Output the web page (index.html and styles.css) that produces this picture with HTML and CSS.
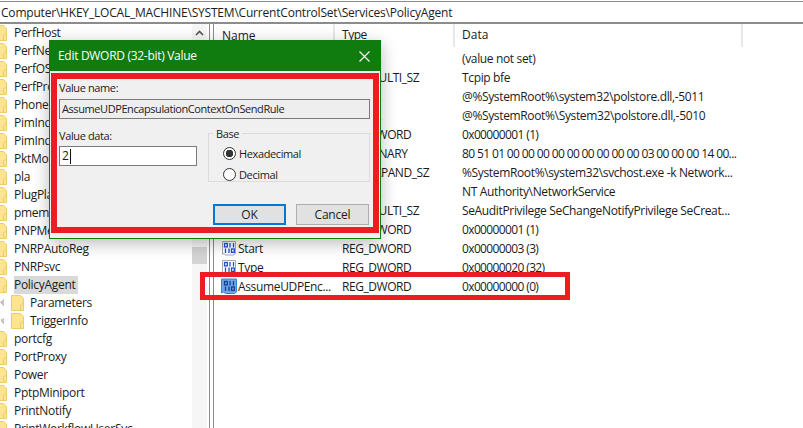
FILE: index.html
```html
<!DOCTYPE html>
<html lang="en">
<head>
<meta charset="utf-8">
<title>Registry Editor</title>
<link rel="stylesheet" href="styles.css">
</head>
<body>
<svg class="defs" width="0" height="0" aria-hidden="true">
  <symbol id="folder" viewBox="0 0 13 16">
    <path d="M.5.5h9l3 3v12H.5z" fill="#fde58f" stroke="#eccb6b"/>
    <path d="M9.5 15.5V10l3-2" fill="none" stroke="#eccb6b"/>
  </symbol>
  <symbol id="dword" viewBox="0 0 16 16">
    <path d="M1.5 1.5h13v12l-2 1.500h-8l-2-1.500-1 1z" fill="#fff" stroke="#a9a9a9"/>
    <g fill="none" stroke="#1c4fd0" stroke-width="1.300">
      <rect x="3.500" y="3.500" width="2.800" height="3.400"/>
      <path d="M9 3v4.500M12.500 3v4.500"/>
      <path d="M4.500 8.500V13M8 8.500V13"/>
      <rect x="10.500" y="9" width="2.800" height="3.400"/>
    </g>
  </symbol>
  <symbol id="dword-sel" viewBox="0 0 16 16">
    <path d="M.5 1h15v13l-2 1.500h-9l-2-1.500-2 1z" fill="#6ea6e2" stroke="#3f82cc"/>
    <g fill="none" stroke="#123f9a" stroke-width="1.300">
      <rect x="3.500" y="3.500" width="2.800" height="3.400"/>
      <path d="M9 3v4.500M12.500 3v4.500"/>
      <path d="M4.500 8.500V13M8 8.500V13"/>
      <rect x="10.500" y="9" width="2.800" height="3.400"/>
    </g>
  </symbol>
</svg>

<header class="address">Computer\HKEY_LOCAL_MACHINE\SYSTEM\CurrentControlSet\Services\PolicyAgent</header>

<main class="panes">
  <nav class="tree">
    <ul class="tree-list">
      <li class="node"><svg class="folder"><use href="#folder"/></svg><span class="label">PerfHost</span></li>
      <li class="node"><svg class="folder"><use href="#folder"/></svg><span class="label">PerfNet</span></li>
      <li class="node"><svg class="folder"><use href="#folder"/></svg><span class="label">PerfOS</span></li>
      <li class="node"><svg class="folder"><use href="#folder"/></svg><span class="label">PerfProc</span></li>
      <li class="node"><svg class="folder"><use href="#folder"/></svg><span class="label">PhoneSvc</span></li>
      <li class="node"><svg class="folder"><use href="#folder"/></svg><span class="label">PimIndexMaintenanceSvc</span></li>
      <li class="node"><svg class="folder"><use href="#folder"/></svg><span class="label">PimIndexSvc</span></li>
      <li class="node"><svg class="folder"><use href="#folder"/></svg><span class="label">PktMon</span></li>
      <li class="node"><svg class="folder"><use href="#folder"/></svg><span class="label">pla</span></li>
      <li class="node"><svg class="folder"><use href="#folder"/></svg><span class="label">PlugPlay</span></li>
      <li class="node"><svg class="folder"><use href="#folder"/></svg><span class="label">pmem</span></li>
      <li class="node"><svg class="folder"><use href="#folder"/></svg><span class="label">PNPMem</span></li>
      <li class="node"><svg class="folder"><use href="#folder"/></svg><span class="label">PNRPAutoReg</span></li>
      <li class="node"><svg class="folder"><use href="#folder"/></svg><span class="label">PNRPsvc</span></li>
      <li class="node"><svg class="folder"><use href="#folder"/></svg><span class="label selected">PolicyAgent</span></li>
      <li class="node child"><span class="chevron"></span><svg class="folder"><use href="#folder"/></svg><span class="label">Parameters</span></li>
      <li class="node child"><span class="chevron"></span><svg class="folder"><use href="#folder"/></svg><span class="label">TriggerInfo</span></li>
      <li class="node"><svg class="folder"><use href="#folder"/></svg><span class="label">portcfg</span></li>
      <li class="node"><svg class="folder"><use href="#folder"/></svg><span class="label">PortProxy</span></li>
      <li class="node"><svg class="folder"><use href="#folder"/></svg><span class="label">Power</span></li>
      <li class="node"><svg class="folder"><use href="#folder"/></svg><span class="label">PptpMiniport</span></li>
      <li class="node"><svg class="folder"><use href="#folder"/></svg><span class="label">PrintNotify</span></li>
      <li class="node"><svg class="folder"><use href="#folder"/></svg><span class="label">PrintWorkflowUserSvc</span></li>
    </ul>
    <div class="scrollbar">
      <svg class="arrow" width="9" height="6" viewBox="0 0 9 6"><path d="M1 5l3.500-3.500L8 5" fill="none" stroke="#555" stroke-width="1.600"/></svg>
      <div class="thumb"></div>
    </div>
  </nav>

  <div class="splitter"></div>

  <section class="values">
    <div class="row head">
      <div class="col col-name">Name</div>
      <div class="col col-type">Type</div>
      <div class="col col-data">Data</div>
    </div>
    <div class="row"><div class="col col-name"><svg class="ico"><use href="#dword"/></svg>(Default)</div><div class="col col-type">REG_SZ</div><div class="col col-data">(value not set)</div></div>
    <div class="row"><div class="col col-name"><svg class="ico"><use href="#dword"/></svg>DependOnS...</div><div class="col col-type">REG_MULTI_SZ</div><div class="col col-data">Tcpip bfe</div></div>
    <div class="row"><div class="col col-name"><svg class="ico"><use href="#dword"/></svg>Description</div><div class="col col-type">REG_SZ</div><div class="col col-data">@%SystemRoot%\system32\polstore.dll,-5011</div></div>
    <div class="row"><div class="col col-name"><svg class="ico"><use href="#dword"/></svg>DisplayName</div><div class="col col-type">REG_SZ</div><div class="col col-data">@%SystemRoot%\System32\polstore.dll,-5010</div></div>
    <div class="row"><div class="col col-name"><svg class="ico"><use href="#dword"/></svg>ErrorControl</div><div class="col col-type">REG_DWORD</div><div class="col col-data num">0x00000001 (1)</div></div>
    <div class="row"><div class="col col-name"><svg class="ico"><use href="#dword"/></svg>FailureActions</div><div class="col col-type">REG_BINARY</div><div class="col col-data num">80 51 01 00 00 00 00 00 00 00 00 00 03 00 00 00 14 00...</div></div>
    <div class="row"><div class="col col-name"><svg class="ico"><use href="#dword"/></svg>ImagePath</div><div class="col col-type">REG_EXPAND_SZ</div><div class="col col-data">%SystemRoot%\system32\svchost.exe -k Network...</div></div>
    <div class="row"><div class="col col-name"><svg class="ico"><use href="#dword"/></svg>ObjectName</div><div class="col col-type">REG_SZ</div><div class="col col-data">NT Authority\NetworkService</div></div>
    <div class="row"><div class="col col-name"><svg class="ico"><use href="#dword"/></svg>RequiredPri...</div><div class="col col-type">REG_MULTI_SZ</div><div class="col col-data">SeAuditPrivilege SeChangeNotifyPrivilege SeCreat...</div></div>
    <div class="row"><div class="col col-name"><svg class="ico"><use href="#dword"/></svg>ServiceSidT...</div><div class="col col-type">REG_DWORD</div><div class="col col-data num">0x00000001 (1)</div></div>
    <div class="row"><div class="col col-name"><svg class="ico"><use href="#dword"/></svg>Start</div><div class="col col-type">REG_DWORD</div><div class="col col-data num">0x00000003 (3)</div></div>
    <div class="row"><div class="col col-name"><svg class="ico"><use href="#dword"/></svg>Type</div><div class="col col-type">REG_DWORD</div><div class="col col-data num">0x00000020 (32)</div></div>
    <div class="row"><div class="col col-name"><svg class="ico"><use href="#dword-sel"/></svg>AssumeUDPEnc...</div><div class="col col-type">REG_DWORD</div><div class="col col-data num">0x00000000 (0)</div></div>
  </section>
</main>

<div class="callout"></div>

<div class="dialog" role="dialog" aria-label="Edit DWORD (32-bit) Value">
  <div class="titlebar">
    <span>Edit DWORD (32-bit) Value</span>
    <svg class="close" width="11" height="11" viewBox="0 0 11 11"><path d="M.5.5l10 10M10.500.5l-10 10" stroke="#fff" stroke-width="1.100" fill="none"/></svg>
  </div>
  <div class="dialog-body">
    <div class="field-label">Value name:</div>
    <div class="readonly">AssumeUDPEncapsulationContextOnSendRule</div>
    <div class="middle">
      <div class="data-col">
        <div class="field-label">Value data:</div>
        <div class="data-input"><span>2</span><i class="caret"></i></div>
      </div>
      <fieldset class="base">
        <legend>Base</legend>
        <div class="radio-row"><span class="radio checked"></span>Hexadecimal</div>
        <div class="radio-row"><span class="radio"></span>Decimal</div>
      </fieldset>
    </div>
    <div class="buttons">
      <div class="btn default">OK</div>
      <div class="btn">Cancel</div>
    </div>
  </div>
</div>
</body>
</html>
```
FILE: styles.css
```css
* { box-sizing: border-box; }
html, body { margin: 0; padding: 0; }
body {
  position: relative;
  width: 803px;
  height: 428px;
  overflow: hidden;
  background: #fff;
  color: #1c1c1c;
  font: 12px/18px "Open Sans", "Noto Sans", sans-serif;
}
.defs { position: absolute; }

.address {
  height: 23px;
  margin-top: 1px;
  padding: 2px 0 0 1px;
  border-top: 1px solid #8c8c8c;
  border-bottom: 2px solid #8c8c8c;
  white-space: nowrap;
  letter-spacing: -0.2px;
}

.panes { display: flex; height: 404px; }

.tree { display: flex; width: 209px; overflow: hidden; flex: none; }
.tree-list { list-style: none; margin: 0; padding: 0; width: 192px; flex: none; overflow: hidden; letter-spacing: -0.3px; }
.node { display: flex; align-items: center; height: 18px; white-space: nowrap; }
.folder { width: 13px; height: 16px; margin-left: -6px; flex: none; }
.label { margin-left: 7px; padding-right: 3px; height: 18px; }
.label.selected { background: #d9d9d9; }
.child .folder { margin-left: 4px; }
.child .label { margin-left: 6px; }
.chevron {
  flex: none;
  width: 7px;
  height: 8px;
  background:
    linear-gradient(135deg, transparent 50%, #c4c4c4 50%) no-repeat 0 0 / 4px 4px,
    linear-gradient(45deg, transparent 50%, #c4c4c4 50%) no-repeat 0 4px / 4px 4px;
}

.scrollbar {
  width: 15px;
  flex: none;
  background: #f6f6f6;
  display: flex;
  flex-direction: column;
  align-items: center;
  padding-top: 6px;
}
.thumb { width: 15px; height: 17px; margin-top: 211px; background: #d4d4d4; }

.splitter { width: 5px; flex: none; border-left: 1px solid #8c8c8c; border-right: 1px solid #8c8c8c; }

.values { flex: 1; min-width: 0; letter-spacing: -0.35px; }
.row { display: flex; height: 19px; line-height: 19px; white-space: nowrap; }
.row.head { height: 24.500px; line-height: 21px; letter-spacing: 0; }
.head .col { border-right: 2px solid #e8e8e8; height: 23px; }
.head .col-data { width: 288px; }
.col { flex: none; overflow: hidden; }
.col-name { width: 121px; padding-left: 8px; display: flex; align-items: center; }
.col-type { width: 120px; padding-left: 7px; letter-spacing: -0.45px; }
.col-data { width: 320px; padding-left: 7px; }
.num { letter-spacing: -0.63px; }
.ico { width: 16px; height: 16px; margin: 0 1px 0 -1px; flex: none; }

.callout {
  position: absolute;
  left: 200px; top: 272px;
  width: 370px; height: 28px;
  border: 5px solid #ed1c24;
}

.dialog {
  position: absolute;
  left: 49px; top: 40px;
  width: 332px; height: 199px;
  background: #f0f0f0;
  border: 1px solid #107c10;
  box-shadow: 0 4px 16px rgba(0,0,0,.28);
}
.titlebar {
  height: 30px;
  background: #107c10;
  color: #fff;
  padding: 0 10px 0 8px;
  display: flex;
  align-items: center;
  justify-content: space-between;
  letter-spacing: -0.3px;
}
.dialog-body {
  margin: 2px 1px 0;
  height: 160px;
  border: 6px solid #ed1c24;
  padding: 0 2px;
  font-size: 11px;
  letter-spacing: -0.38px;
}
.field-label { height: 18px; }
.readonly {
  height: 20px;
  margin-top: 2px;
  width: 311px;
  padding-left: 2px;
  background: #eeeeee;
  border: 1px solid #7a7a7a;
  line-height: 18px;
  letter-spacing: -0.42px;
  white-space: nowrap;
}
.middle { display: flex; gap: 11px; margin-top: 7px; }
.data-col { width: 138px; flex: none; padding-top: 1px; }
.data-input {
  height: 20px;
  margin-top: 1px;
  background: #fff;
  border: 1px solid #7a7a7a;
  padding-left: 2px;
  line-height: 18px;
  display: flex;
  align-items: center;
  gap: 1px;
  font-size: 12px;
  letter-spacing: 0;
}
.caret { width: 1px; height: 15px; background: #111; display: block; }
.base {
  width: 162px; height: 56px;
  margin: 0; padding: 2px 0 0 14px;
  border: 1px solid #dcdcdc;
  min-width: 0;
}
.base legend { padding: 0 3px; margin-left: -10px; line-height: 15px; }
.radio-row { display: flex; align-items: center; height: 21px; gap: 3px; }
.radio {
  width: 13px; height: 13px; border-radius: 50%;
  border: 1px solid #333; background: #fff;
  flex: none;
  display: block;
}
.radio.checked { background: radial-gradient(circle, #333 0 3.500px, #fff 4px); }
.buttons { display: flex; justify-content: flex-end; gap: 10px; margin-top: 22px; padding-right: 2px; font-size: 12px; letter-spacing: -0.2px; }
.btn {
  width: 73px; height: 21px;
  background: #e1e1e1;
  border: 1px solid #adadad;
  text-align: center;
  line-height: 19px;
}
.btn.default { border: 2px solid #0078d7; line-height: 17px; }
```
